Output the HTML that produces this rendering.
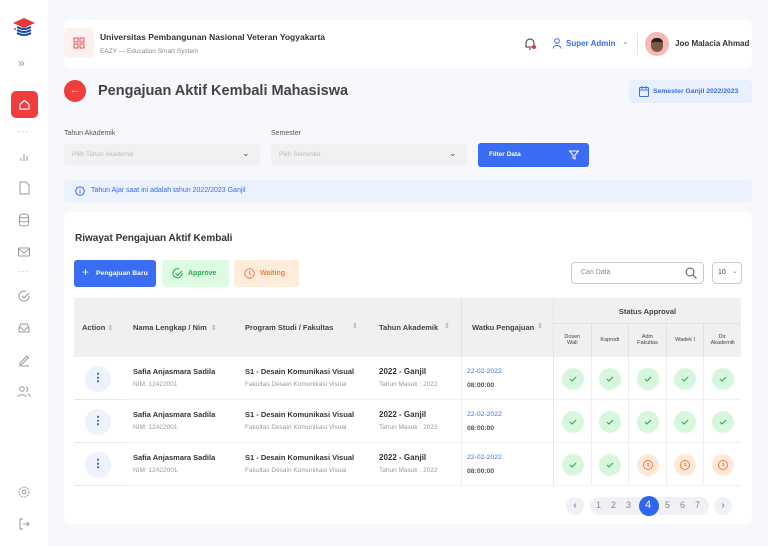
<!DOCTYPE html>
<html><head><meta charset="utf-8"><style>
*{box-sizing:border-box;margin:0;padding:0}
body{width:768px;height:546px;overflow:hidden;background:#f6f8fc;font-family:"Liberation Sans",sans-serif;position:relative;color:#333}
.abs{position:absolute}
.side{left:0;top:0;width:48px;height:546px;background:#fff}
.si{position:absolute;left:16px;width:16px;height:16px}
.card{background:#fff;border-radius:6px}
.b{font-weight:bold}
.th{position:absolute;font-size:7.5px;font-weight:bold;color:#444}
.sort{color:#bbb;font-size:7px}
.cell{position:absolute;font-size:7.5px}
.pn{position:absolute;top:500px;font-size:9px;color:#888}
</style></head><body>
<div class="abs side">
 <svg class="abs" style="left:12px;top:16px" width="24" height="22" viewBox="0 0 24 22"><path d="M1 7L12 2l11 5-11 5z" fill="#e53935"/><path d="M5 11q7 4 14 0M5 14q7 4 14 0M5 17q7 4 14 0" stroke="#1e4fa8" stroke-width="2" fill="none"/><circle cx="3" cy="13" r="1" fill="#e53935"/></svg>
 <div class="abs" style="left:18px;top:56px;font-size:12px;color:#999">»</div>
 <div class="abs" style="left:11px;top:91px;width:27px;height:27px;background:#f03e3e;border-radius:5px"><svg style="margin:8px" width="11" height="11" viewBox="0 0 12 12"><path d="M1 6L6 1.5 11 6V11H1z" stroke="#fff" fill="none" stroke-width="1.3"/></svg></div>
 <div class="abs" style="left:18px;top:127px;font-size:8px;color:#999;letter-spacing:1px">···</div>
 <svg class="si" style="top:148px" viewBox="0 0 16 16"><path d="M5 13V10M8 13V6M11 13V8" stroke="#999" fill="none"/></svg>
 <svg class="si" style="top:180px" viewBox="0 0 16 16"><path d="M4 2h6l3 3v9H4z" stroke="#999" fill="none"/></svg>
 <svg class="si" style="top:212px" viewBox="0 0 16 16"><ellipse cx="8" cy="4" rx="4.5" ry="2" stroke="#999" fill="none"/><path d="M3.5 4v8c0 2.6 9 2.6 9 0V4M3.5 8c0 2.6 9 2.6 9 0" stroke="#999" fill="none"/></svg>
 <svg class="si" style="top:244px" viewBox="0 0 16 16"><rect x="2.5" y="4" width="11" height="8" rx="1" stroke="#999" fill="none"/><path d="M3 5l5 4 5-4" stroke="#999" fill="none"/></svg>
 <div class="abs" style="left:18px;top:267px;font-size:8px;color:#999;letter-spacing:1px">···</div>
 <svg class="si" style="top:288px" viewBox="0 0 16 16"><path d="M13 7.5A5 5 0 1 1 10 3.5M6 8l2 2 5-5" stroke="#999" fill="none"/></svg>
 <svg class="si" style="top:320px" viewBox="0 0 16 16"><path d="M3 8l2-4h6l2 4v4H3zM3 8h3l1 2h2l1-2h3" stroke="#999" fill="none"/></svg>
 <svg class="si" style="top:352px" viewBox="0 0 16 16"><path d="M4 11l7-7 1.5 1.5-7 7H4zM3 14h10" stroke="#999" fill="none"/></svg>
 <svg class="si" style="top:384px" viewBox="0 0 16 16"><circle cx="6" cy="5" r="2.3" stroke="#999" fill="none"/><path d="M2 13c0-3 8-3 8 0M10 3a2.3 2.3 0 0 1 0 4.5M12 10c1.5.5 2 1.5 2 3" stroke="#999" fill="none"/></svg>
 <svg class="si" style="top:484px" viewBox="0 0 16 16"><circle cx="8" cy="8" r="2" stroke="#999" fill="none"/><circle cx="8" cy="8" r="5" stroke="#999" fill="none" stroke-dasharray="2 1"/></svg>
 <svg class="si" style="top:516px" viewBox="0 0 16 16"><path d="M7 3H4v10h3M7 8h6M11 6l2 2-2 2" stroke="#999" fill="none"/></svg>
</div>

<div class="abs card" style="left:64px;top:20px;width:688px;height:48px">
 <div class="abs" style="left:0;top:8px;width:30px;height:30px;background:#fdf0f0;border-radius:5px"><svg style="margin:9px" width="12" height="12" viewBox="0 0 12 12"><g stroke="#e25555" fill="none"><rect x="1" y="1" width="4" height="4"/><rect x="7" y="1" width="4" height="4"/><rect x="1" y="7" width="4" height="4"/><rect x="7" y="7" width="4" height="4"/></g></svg></div>
 <div class="abs b" style="left:36px;top:12px;font-size:8.5px;color:#333">Universitas Pembangunan Nasional Veteran Yogyakarta</div>
 <div class="abs" style="left:36px;top:28px;font-size:6.5px;color:#888">EAZY — Education Smart System</div>
 <svg class="abs" style="left:459px;top:17px" width="14" height="14" viewBox="0 0 14 14"><path d="M3 10V6a4 4 0 0 1 8 0v4H2.5h9M6 12h2" stroke="#333" fill="none"/><circle cx="11" cy="10" r="2" fill="#e53935"/></svg>
 <svg class="abs" style="left:488px;top:18px" width="10" height="11" viewBox="0 0 10 11"><circle cx="5" cy="3" r="2.3" stroke="#3a6ee8" fill="none"/><path d="M1 10.5c0-4 8-4 8 0" stroke="#3a6ee8" fill="none"/></svg>
 <div class="abs b" style="left:502px;top:19px;font-size:8px;color:#3a6ee8">Super Admin</div>
 <div class="abs" style="left:558px;top:17px;font-size:8px;color:#888">⌄</div>
 <div class="abs" style="left:573px;top:13px;width:1px;height:22px;background:#e5e5e5"></div>
 <div class="abs" style="left:581px;top:12px;width:24px;height:24px;border-radius:50%;background:#f8b9b3;overflow:hidden"><div style="margin:6px 6px;width:12px;height:14px;border-radius:5px 5px 6px 6px;background:#7a5a45;border-top:4px solid #222"></div></div>
 <div class="abs b" style="left:611px;top:19px;font-size:8px;color:#333">Joo Malacia Ahmad</div>
</div>

<div class="abs" style="left:64px;top:80px;width:22px;height:22px;border-radius:50%;background:#f03e3e;color:#fff;font-size:10px;text-align:center;line-height:22px">←</div>
<div class="abs b" style="left:98px;top:83px;font-size:14.5px;color:#444">Pengajuan Aktif Kembali Mahasiswa</div>
<div class="abs" style="left:629px;top:80px;width:123px;height:23px;background:#e8efff;border-radius:4px"><svg class="abs" style="left:10px;top:6px" width="10" height="11" viewBox="0 0 10 11"><rect x="0.5" y="1.5" width="9" height="9" rx="1" stroke="#3a6ee8" fill="none"/><path d="M0.5 4h9M3 0v3M7 0v3" stroke="#3a6ee8"/></svg><span class="abs b" style="left:24px;top:8px;font-size:6.8px;color:#3a6ee8;white-space:nowrap">Semester Ganjil 2022/2023</span></div>

<div class="abs" style="left:64px;top:130px;font-size:7px;color:#555">Tahun Akademik</div>
<div class="abs" style="left:271px;top:130px;font-size:7px;color:#555">Semester</div>
<div class="abs" style="left:64px;top:144px;width:196px;height:22px;background:#f1f1f3;border-radius:4px"><span class="abs" style="left:8px;top:7px;font-size:6.5px;color:#bbb">Pilih Tahun Akademik</span><span class="abs" style="left:178px;top:4px;font-size:9px;color:#555">⌄</span></div>
<div class="abs" style="left:271px;top:144px;width:196px;height:22px;background:#f1f1f3;border-radius:4px"><span class="abs" style="left:8px;top:7px;font-size:6.5px;color:#bbb">Pilih Semester</span><span class="abs" style="left:178px;top:4px;font-size:9px;color:#555">⌄</span></div>
<div class="abs" style="left:478px;top:143px;width:111px;height:24px;background:#3a6cf4;border-radius:3px"><span class="abs b" style="left:11px;top:8px;font-size:6.5px;color:#fff">Filter Data</span><svg class="abs" style="left:91px;top:7px" width="10" height="10" viewBox="0 0 10 10"><path d="M0.5 1h9L6 5v4L4 8V5z" stroke="#fff" fill="none"/></svg></div>

<div class="abs" style="left:64px;top:180px;width:688px;height:22px;background:#ebf1fd;border-radius:4px"><svg class="abs" style="left:11px;top:6px" width="10" height="10" viewBox="0 0 10 10"><circle cx="5" cy="5" r="4.3" stroke="#3a6ee8" fill="none"/><path d="M5 4.5v3M5 2.5v1" stroke="#3a6ee8"/></svg><span class="abs" style="left:27px;top:7px;font-size:7px;color:#3a6ee8">Tahun Ajar saat ini adalah tahun 2022/2023 Ganjil</span></div>

<div class="abs card" style="left:64px;top:212px;width:688px;height:312px"></div>
<div class="abs b" style="left:75px;top:233px;font-size:10px;color:#333">Riwayat Pengajuan Aktif Kembali</div>
<div class="abs" style="left:74px;top:260px;width:82px;height:27px;background:#3a6cf4;border-radius:3px"><span class="abs" style="left:8px;top:5px;font-size:12px;color:#fff">+</span><span class="abs b" style="left:22px;top:10px;font-size:6.8px;color:#fff">Pengajuan Baru</span></div>
<div class="abs" style="left:162px;top:260px;width:67px;height:27px;background:#ddfbe1;border-radius:3px"><svg class="abs" style="left:10px;top:8px" width="11" height="11" viewBox="0 0 11 11"><path d="M10 5A4.5 4.5 0 1 1 7.5 1.2M3.5 5.5l2 2L10 3" stroke="#2fa84f" fill="none"/></svg><span class="abs b" style="left:26px;top:10px;font-size:7px;color:#2fa84f">Approve</span></div>
<div class="abs" style="left:234px;top:260px;width:65px;height:27px;background:#fdecd9;border-radius:3px"><svg class="abs" style="left:10px;top:8px" width="11" height="11" viewBox="0 0 11 11"><circle cx="5.5" cy="5.5" r="4.7" stroke="#ef7d47" fill="none"/><path d="M5.5 3v2.7l1.8 1.2" stroke="#ef7d47" fill="none"/></svg><span class="abs b" style="left:26px;top:10px;font-size:7px;color:#ef7d47">Waiting</span></div>
<div class="abs" style="left:571px;top:262px;width:133px;height:22px;border:1px solid #ccc;border-radius:4px"><span class="abs" style="left:9px;top:6px;font-size:7px;color:#888">Cari Data</span><svg class="abs" style="left:113px;top:4px" width="12" height="12" viewBox="0 0 12 12"><circle cx="5" cy="5" r="4" stroke="#555" fill="none"/><path d="M8 8l3.5 3.5" stroke="#555"/></svg></div>
<div class="abs" style="left:712px;top:262px;width:30px;height:22px;border:1px solid #ccc;border-radius:4px"><span class="abs" style="left:5px;top:6px;font-size:7px;color:#444">10</span><span class="abs" style="left:19px;top:4px;font-size:7px;color:#888">⌄</span></div>

<div class="abs" style="left:74px;top:298px;width:667px;height:59px;background:#f0f0f0"></div>
<div class="abs" style="left:461px;top:298px;width:1px;height:59px;background:#e2e2e2"></div>
<div class="abs" style="left:553px;top:298px;width:1px;height:188px;background:#e6e6e6"></div>
<div class="abs" style="left:554px;top:323px;width:187px;height:1px;background:#e2e2e2"></div>
<div class="th" style="left:82px;top:323px">Action <span class="sort">⇕</span></div>
<div class="th" style="left:133px;top:323px">Nama Lengkap / Nim <span class="sort">&nbsp;⇕</span></div>
<div class="th" style="left:245px;top:323px">Program Studi / Fakultas</div><div class="th sort" style="left:352px;top:322px">⇕</div>
<div class="th" style="left:379px;top:323px">Tahun Akademik</div><div class="th sort" style="left:444px;top:322px">⇕</div>
<div class="th" style="left:472px;top:323px">Watku Pengajuan</div><div class="th sort" style="left:537px;top:322px">⇕</div>
<div class="th" style="left:554px;top:307px;width:187px;text-align:center">Status Approval</div>
<div class="abs" style="left:554px;top:324px;width:187px;height:33px;display:flex;font-size:5.5px;color:#444;text-align:center;align-items:center">
 <div style="flex:1;border-right:1px solid #e2e2e2;height:33px;padding-top:10px">Dosen<br>Wali</div>
 <div style="flex:1;border-right:1px solid #e2e2e2;height:33px;padding-top:13px">Kaprodi</div>
 <div style="flex:1;border-right:1px solid #e2e2e2;height:33px;padding-top:10px">Adm<br>Fakultas</div>
 <div style="flex:1;border-right:1px solid #e2e2e2;height:33px;padding-top:13px">Wadek I</div>
 <div style="flex:1;height:33px;padding-top:10px">Dir.<br>Akademik</div>
</div>

<div id="rows"></div>
<script>
var html='';
var stats=[[1,1,1,1,1],[1,1,1,1,1],[1,1,0,0,0]];
for(var i=0;i<3;i++){var y=357+i*43;
html+='<div class="abs" style="left:74px;top:'+(y+42)+'px;width:49px;height:1px;background:#e6e6e6"></div>';
html+='<div class="abs" style="left:123px;top:'+(y+42)+'px;width:618px;height:1px;background:#f0f0f0"></div>';
html+='<div class="abs" style="left:461px;top:'+y+'px;width:1px;height:43px;background:#eee"></div>';
for(var k=1;k<5;k++)html+='<div class="abs" style="left:'+(553+k*37.6)+'px;top:'+y+'px;width:1px;height:43px;background:#eee"></div>';
html+='<div class="abs" style="left:85px;top:'+(y+9)+'px;width:26px;height:26px;border-radius:50%;background:#eef2fc;color:#2a4fa8;font-size:11px;font-weight:bold;text-align:center;line-height:24px">⋮</div>';
html+='<div class="cell b" style="left:133px;top:'+(y+10)+'px;color:#333">Safia Anjasmara Sadila</div>';
html+='<div class="cell" style="left:133px;top:'+(y+24)+'px;font-size:6.5px;color:#999">NIM: 12422001</div>';
html+='<div class="cell b" style="left:245px;top:'+(y+10)+'px;color:#333">S1 - Desain Komunikasi Visual</div>';
html+='<div class="cell" style="left:245px;top:'+(y+24)+'px;font-size:6.5px;color:#999">Fakultas Desain Komunikasi Visual</div>';
html+='<div class="cell b" style="left:379px;top:'+(y+10)+'px;font-size:8px;color:#333">2022 - Ganjil</div>';
html+='<div class="cell" style="left:379px;top:'+(y+24)+'px;font-size:6.5px;color:#999">Tahun Masuk : 2022</div>';
html+='<div class="cell" style="left:467px;top:'+(y+11)+'px;font-size:6.8px;color:#3a6ee8">22-02-2022</div>';
html+='<div class="cell b" style="left:467px;top:'+(y+25)+'px;font-size:6.8px;color:#555">08:00:00</div>';
for(var k=0;k<5;k++){var x=554+k*37.6+7.5;
 if(stats[i][k])html+='<div class="abs" style="left:'+x+'px;top:'+(y+11)+'px;width:22px;height:22px;border-radius:50%;background:#d6f7dc"><svg style="margin:7px" width="8" height="8" viewBox="0 0 8 8"><path d="M1 4l2 2 4-4" stroke="#2fa84f" fill="none" stroke-width="1.1"/></svg></div>';
 else html+='<div class="abs" style="left:'+x+'px;top:'+(y+11)+'px;width:22px;height:22px;border-radius:50%;background:#fde9d6"><svg style="margin:5px" width="12" height="12" viewBox="0 0 12 12"><circle cx="6" cy="6" r="4.5" stroke="#ef7d47" fill="none"/><path d="M6 3.5v2.7l1.6 1" stroke="#ef7d47" fill="none"/></svg></div>';
}}
document.getElementById('rows').innerHTML=html;
</script>

<div class="abs" style="left:566px;top:497px;width:18px;height:18px;border-radius:50%;background:#f0f1f4;color:#3a6ee8;font-size:10px;text-align:center;line-height:17px">‹</div>
<div class="abs" style="left:590px;top:497px;width:119px;height:18px;border-radius:9px;background:#f0f1f4"></div>
<div class="abs" style="left:639px;top:496px;width:20px;height:20px;border-radius:50%;background:#2f66f0"></div>
<span class="pn" style="left:596px">1</span>
<span class="pn" style="left:611px">2</span>
<span class="pn" style="left:626px">3</span>
<span class="pn" style="left:645px;top:499px;font-size:11px;color:#fff">4</span>
<span class="pn" style="left:665px">5</span>
<span class="pn" style="left:680px">6</span>
<span class="pn" style="left:695px">7</span>
<div class="abs" style="left:714px;top:497px;width:18px;height:18px;border-radius:50%;background:#f0f1f4;color:#3a6ee8;font-size:10px;text-align:center;line-height:17px">›</div>
</body></html>
